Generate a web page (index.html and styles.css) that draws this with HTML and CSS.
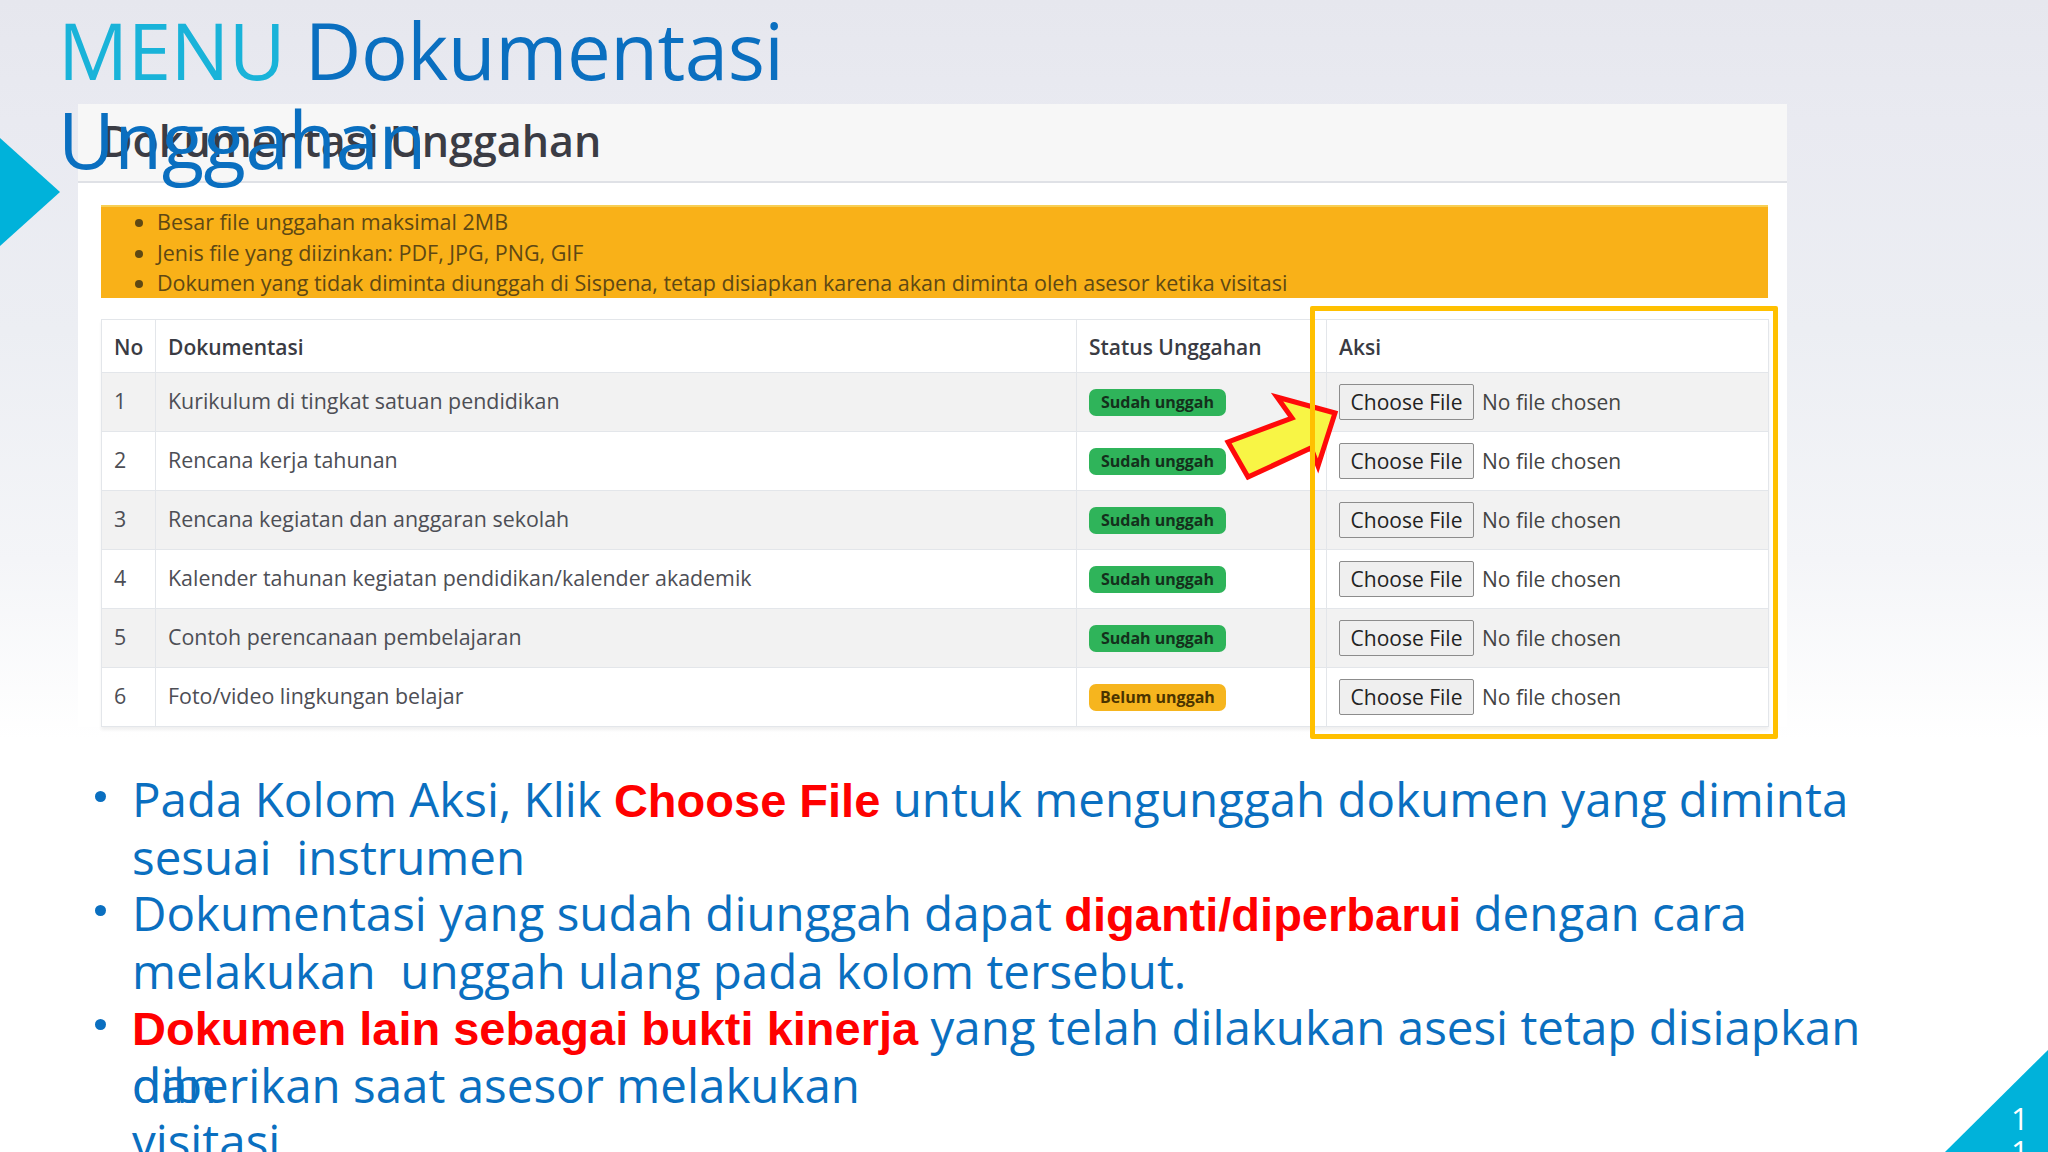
FILE: index.html
```html
<!DOCTYPE html>
<html lang="id">
<head>
<meta charset="utf-8">
<title>MENU Dokumentasi Unggahan</title>
<link rel="stylesheet" href="styles.css">
</head>
<body>
<div class="slide">
  <div class="tri-left"></div>

  <div class="shot">
    <div class="shot-head">Dokumentasi Unggahan</div>
    <div class="shot-body">
      <div class="alert">
        <ul>
          <li>Besar file unggahan maksimal 2MB</li>
          <li>Jenis file yang diizinkan: PDF, JPG, PNG, GIF</li>
          <li>Dokumen yang tidak diminta diunggah di Sispena, tetap disiapkan karena akan diminta oleh asesor ketika visitasi</li>
        </ul>
      </div>
      <table class="docs">
        <colgroup>
          <col class="c-no"><col class="c-doc"><col class="c-status"><col class="c-aksi">
        </colgroup>
        <thead>
          <tr><th>No</th><th>Dokumentasi</th><th>Status Unggahan</th><th>Aksi</th></tr>
        </thead>
        <tbody>
          <tr><td>1</td><td>Kurikulum di tingkat satuan pendidikan</td><td><span class="badge ok">Sudah unggah</span></td><td><span class="file"><span class="choose">Choose File</span><span class="nofile">No file chosen</span></span></td></tr>
          <tr><td>2</td><td>Rencana kerja tahunan</td><td><span class="badge ok">Sudah unggah</span></td><td><span class="file"><span class="choose">Choose File</span><span class="nofile">No file chosen</span></span></td></tr>
          <tr><td>3</td><td>Rencana kegiatan dan anggaran sekolah</td><td><span class="badge ok">Sudah unggah</span></td><td><span class="file"><span class="choose">Choose File</span><span class="nofile">No file chosen</span></span></td></tr>
          <tr><td>4</td><td>Kalender tahunan kegiatan pendidikan/kalender akademik</td><td><span class="badge ok">Sudah unggah</span></td><td><span class="file"><span class="choose">Choose File</span><span class="nofile">No file chosen</span></span></td></tr>
          <tr><td>5</td><td>Contoh perencanaan pembelajaran</td><td><span class="badge ok">Sudah unggah</span></td><td><span class="file"><span class="choose">Choose File</span><span class="nofile">No file chosen</span></span></td></tr>
          <tr><td>6</td><td>Foto/video lingkungan belajar</td><td><span class="badge warn">Belum unggah</span></td><td><span class="file"><span class="choose">Choose File</span><span class="nofile">No file chosen</span></span></td></tr>
        </tbody>
      </table>
    </div>
  </div>

  <ul class="notes">
    <li><span class="dot"></span><span class="txt">Pada Kolom Aksi, Klik <b class="red">Choose File</b> untuk mengunggah dokumen yang diminta<br>sesuai&nbsp; instrumen</span></li>
    <li><span class="dot"></span><span class="txt">Dokumentasi yang sudah diunggah dapat <b class="red">diganti/diperbarui</b> dengan cara<br>melakukan&nbsp; unggah ulang pada kolom tersebut.</span></li>
    <li><span class="dot"></span><span class="txt"><b class="red">Dokumen lain sebagai bukti kinerja</b> yang telah dilakukan asesi tetap disiapkan<br><span class="overlap"><span class="ghost">dan</span>diberikan saat asesor melakukan</span><br>visitasi</span></li>
  </ul>

  <h1 class="title"><span class="menu">MENU</span> Dokumentasi Unggahan</h1>

  <svg class="arrow" width="140" height="115" viewBox="0 0 140 115">
    <polygon points="120,33 62,17 77,38 13,62 33,97 96,68 103,86" fill="#f8f545" stroke="#ff0a0a" stroke-width="5" stroke-linejoin="miter"/>
  </svg>
  <div class="highlight"></div>

  <div class="tri-corner"></div>
  <div class="pagenum">11</div>
</div>
</body>
</html>
```

FILE: styles.css
```css
* { box-sizing: border-box; }
html, body { margin: 0; padding: 0; }
body {
  width: 2048px;
  height: 1152px;
  overflow: hidden;
  background: #fff;
}
.slide {
  position: relative;
  width: 2048px;
  height: 1152px;
  overflow: hidden;
  padding: 104px 0 0 78px;
  display: flex;
  flex-direction: column;
  align-items: flex-start;
  background: linear-gradient(180deg, #e6e7ee 0px, #e9eaf1 120px, #eceef3 330px, #f4f5f8 560px, #ffffff 740px);
  font-family: "Open Sans", "Noto Sans", sans-serif;
}
.tri-left {
  position: absolute;
  left: 0;
  top: 138px;
  width: 0;
  height: 0;
  border-top: 54px solid transparent;
  border-bottom: 54px solid transparent;
  border-left: 60px solid #00b2da;
}
.title {
  position: absolute;
  left: 58px;
  top: 6px;
  width: 780px;
  margin: 0;
  font-family: "Open Sans", "Noto Sans", sans-serif;
  font-weight: 400;
  font-size: 78px;
  line-height: 89px;
  color: #0a6fc0;
  letter-spacing: -0.5px;
}
.title .menu { color: #19b3d9; }

/* embedded screenshot */
.shot {
  width: 1709px;
  height: 627px;
  background: #fff;
}
.shot-head {
  height: 79px;
  background: #f7f7f7;
  border-bottom: 2px solid #dfe1e6;
  padding-left: 23px;
  font-size: 43px;
  font-weight: 600;
  line-height: 74px;
  color: #3b3c44;
}
.shot-body {
  padding: 22px 19px 0 23px;
}
.alert {
  height: 93px;
  background: #f9b118;
  border-top: 2px solid #f7cf55;
  padding-top: 0;
  color: #5e4814;
  font-size: 21.5px;
  line-height: 30.5px;
}
.alert ul {
  margin: 0;
  padding-left: 56px;
}
.docs {
  margin-top: 21px;
  width: 1667px;
  border-collapse: collapse;
  table-layout: fixed;
  font-size: 21.4px;
  color: #4d4e55;
  box-shadow: 0 3px 3px rgba(0,0,0,0.06);
}
.c-no { width: 54px; }
.c-doc { width: 921px; }
.c-status { width: 250px; }
.c-aksi { width: 442px; }
.docs th, .docs td {
  border: 1px solid #e3e6ea;
  text-align: left;
  padding: 0 12px;
  vertical-align: middle;
}
.docs th {
  height: 53px;
  font-weight: 600;
  font-size: 21px;
  color: #3a3b43;
  padding-top: 2px;
}
.docs td { height: 59px; padding-bottom: 4px; }
.docs tbody tr:nth-child(odd) td { background: #f2f2f2; }
.docs tbody tr:nth-child(even) td { background: #ffffff; }
.badge {
  display: inline-block;
  width: 137px;
  height: 27px;
  line-height: 27px;
  border-radius: 7px;
  text-align: center;
  font-family: "Open Sans", "Noto Sans", sans-serif;
  font-weight: 700;
  font-size: 16px;
  color: #14301c;
}
.badge.ok { background: #2fb45a; }
.badge.warn { background: #f6b51e; color: #4a3400; }
.file {
  display: flex;
  align-items: center;
  gap: 8px;
  margin-top: 4px;
}
.choose {
  display: inline-block;
  width: 135px;
  height: 36px;
  line-height: 34px;
  text-align: center;
  background: #efefef;
  border: 1px solid #8c8c8c;
  border-radius: 2px;
  color: #222;
  font-size: 21px;
}
.nofile {
  font-size: 21px;
  color: #444;
}

/* overlay highlight + arrow */
.arrow {
  position: absolute;
  left: 1215px;
  top: 380px;
}
.highlight {
  position: absolute;
  left: 1310px;
  top: 306px;
  width: 468px;
  height: 433px;
  border: 5px solid #ffc000;
  border-radius: 2px;
}

/* bottom notes */
.notes {
  list-style: none;
  margin: 44px 0 0 14px;
  padding: 0;
  font-size: 47.5px;
  line-height: 56px;
  color: #0a6fc0;
}
.notes li {
  display: flex;
  align-items: flex-start;
}
.dot {
  flex: 0 0 40px;
  height: 56px;
  display: flex;
  align-items: center;
}
.dot::before {
  content: "";
  width: 11px;
  height: 11px;
  border-radius: 50%;
  background: #0a6fc0;
  margin-top: -6px;
  margin-left: 3px;
}
.txt { white-space: nowrap; }
.red {
  font-family: "Liberation Sans", Arial, sans-serif;
  font-weight: 700;
  font-size: 47px;
  color: #ff0000;
}
.overlap {
  position: relative;
  display: inline-block;
}
.ghost {
  position: absolute;
  left: 0;
  top: 0;
}

.tri-corner {
  position: absolute;
  right: 0;
  bottom: 0;
  width: 0;
  height: 0;
  border-left: 103px solid transparent;
  border-bottom: 102px solid #00b2da;
}
.pagenum {
  position: absolute;
  left: 2011px;
  top: 1102px;
  width: 20px;
  word-break: break-all;
  font-family: "Open Sans", "Noto Sans", sans-serif;
  font-size: 31px;
  line-height: 33px;
  color: #fff;
}
```
